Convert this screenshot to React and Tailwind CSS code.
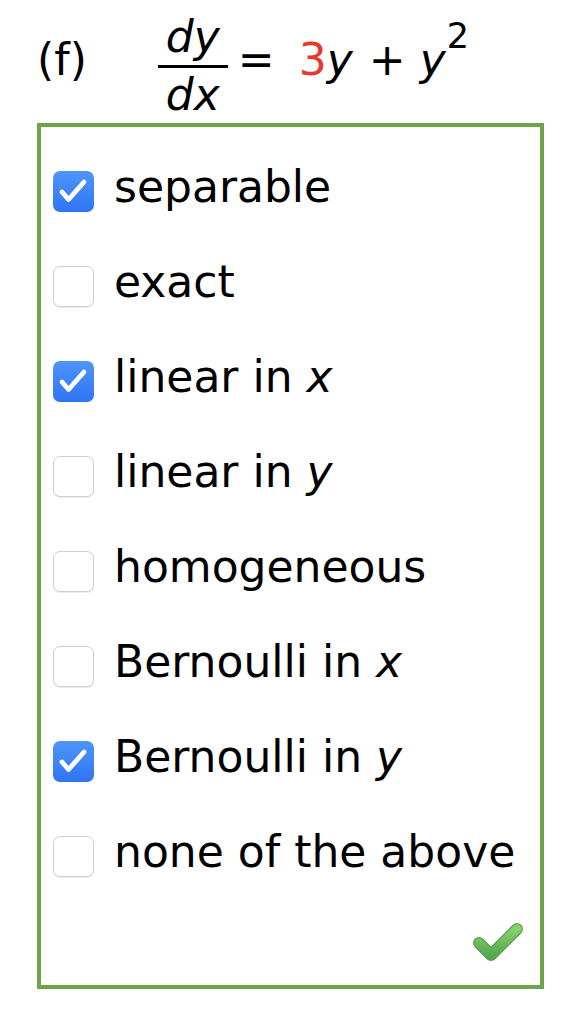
import React from 'react';

const options = [
    { label: 'separable', checked: true },
    { label: 'exact', checked: false },
    { label: 'linear in ', v: 'x', checked: true },
    { label: 'linear in ', v: 'y', checked: false },
    { label: 'homogeneous', checked: false },
    { label: 'Bernoulli in ', v: 'x', checked: false },
    { label: 'Bernoulli in ', v: 'y', checked: true },
    { label: 'none of the above', checked: false },
];

const Box = ({ checked }) =>
    checked ? (
        <div className="w-[41px] h-[41px] rounded-[7px] bg-gradient-to-b from-[#4f95f9] to-[#2f74f4] flex items-center justify-center shrink-0">
            <svg width="41" height="41" viewBox="0 0 41 41">
                <path d="M9 21 L15.5 28.5 L31 11" fill="none" stroke="#fff" strokeWidth="4.8" strokeLinecap="round" strokeLinejoin="round" />
            </svg>
        </div>
    ) : (
        <div className="w-[41px] h-[41px] rounded-[7px] bg-white border-[1.5px] border-[#cfcfcf] shadow-[0_1px_1px_rgba(0,0,0,0.08)] shrink-0" />
    );

const GreenCheck = () => (
    <svg width="54" height="46" viewBox="0 0 54 46">
        <defs>
            <linearGradient id="gc" x1="0" y1="0" x2="0" y2="1">
                <stop offset="0" stopColor="#86d06f" />
                <stop offset="1" stopColor="#56a84e" />
            </linearGradient>
        </defs>
        <path d="M8 25 L20 37 L46 11" fill="none" stroke="#5a9e4f" strokeWidth="12" strokeLinecap="round" strokeLinejoin="round" />
        <path d="M8 25 L20 37 L46 11" fill="none" stroke="url(#gc)" strokeWidth="9.5" strokeLinecap="round" strokeLinejoin="round" />
    </svg>
);

export default function App() {
    return (
        <div className="w-[573px] h-[1021px] bg-white text-black font-['DejaVu_Sans',Verdana,sans-serif] text-[44px] leading-[44px]">
            {/* Question header */}
            <div className="h-[123px] flex items-start pl-[37px]">
                <span className="mt-[38px]">(f)</span>
                <div className="ml-[71px] mt-[15px] flex flex-col items-center w-[70px]">
                    <span className="italic">dy</span>
                    <div className="w-[70px] h-[3px] bg-black mt-[6px]" />
                    <span className="italic mt-[5px]">dx</span>
                </div>
                <span className="mt-[38px] ml-[10px] whitespace-nowrap">
                    <span>=</span>
                    <span className="ml-[24px] text-[#e5392b]">3</span>
                    <span className="italic">y</span>
                    <span className="ml-[16px]">+</span>
                    <span className="ml-[14px] italic">y</span>
                    <span className="ml-[1px] text-[35px] relative -top-[27px]">2</span>
                </span>
            </div>

            {/* Options box */}
            <div className="ml-[37px] w-[507px] h-[866px] border-4 border-[#6da54a] pl-[12px] pt-[38px] flex flex-col">
                {options.map((o, i) => (
                    <div key={i} className="h-[95px] flex items-start shrink-0">
                        <div className="mt-[6px]">
                            <Box checked={o.checked} />
                        </div>
                        <span className="ml-[20px] whitespace-pre">
                            {o.label}
                            {o.v && <span className="italic">{o.v}</span>}
                        </span>
                    </div>
                ))}
                <div className="flex justify-end pr-[15px] -mt-[7px]">
                    <GreenCheck />
                </div>
            </div>
        </div>
    );
}
